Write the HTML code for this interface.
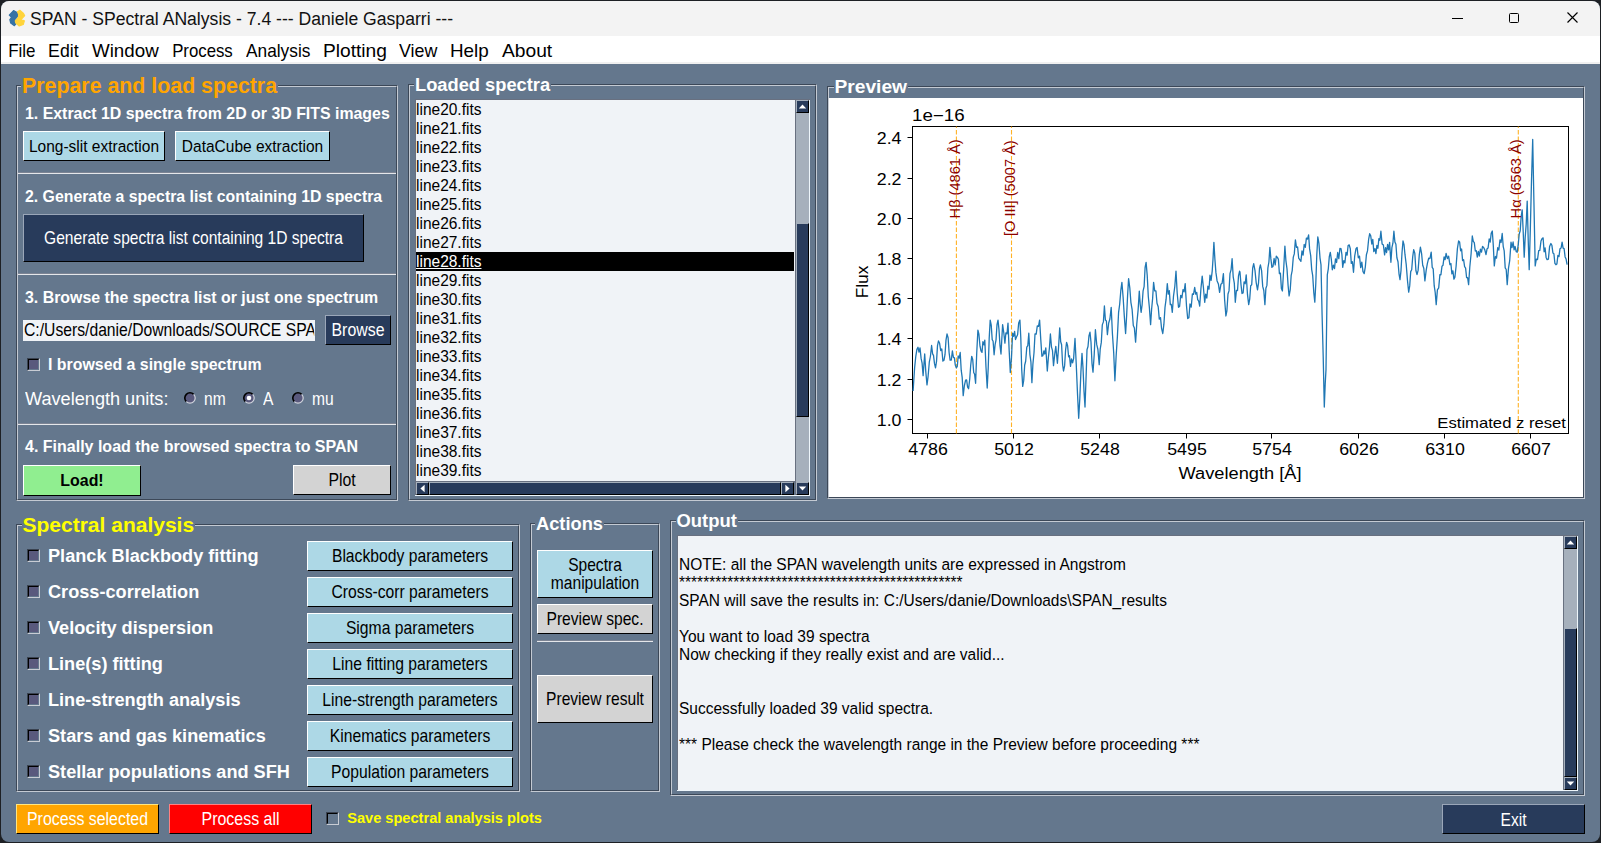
<!DOCTYPE html>
<html><head><meta charset="utf-8"><style>
html,body{margin:0;padding:0;width:1601px;height:843px;overflow:hidden;background:#1d2024;}
body>div,body>svg{position:absolute;box-sizing:border-box;}
.t{font-family:"Liberation Sans", sans-serif;white-space:nowrap;}
</style></head><body>
<div style="left:0px;top:0px;width:1601px;height:843px;background:#1d2024;"></div>
<div style="left:1px;top:1px;width:1599px;height:841px;background:#64778d;border-radius:8px;overflow:hidden;"></div>
<div style="left:1px;top:1px;width:1599px;height:35px;background:#f3f3f3;border-radius:8px 8px 0 0;"></div>
<div style="left:1px;top:36px;width:1599px;height:26px;background:#ffffff;"></div>
<div style="left:1px;top:62px;width:1599px;height:2px;background:#f0f0f0;"></div>
<svg style="left:0;top:0;width:40px;height:40px" viewBox="0 0 40 40"><polygon points="9.27,15.12 13.55,10.56 17.82,13.12 18.68,15.40 14.97,19.39 16.11,23.66 14.40,25.66 10.70,23.09 9.84,19.68 11.55,17.40" fill="#3572a5" stroke="#3572a5" stroke-width="1.2" stroke-linejoin="round"/><polygon points="17.54,11.70 19.81,10.27 23.52,13.41 24.66,15.69 20.95,19.68 24.37,20.81 23.23,24.52 19.25,25.94 15.83,23.09 15.26,20.81 18.39,17.40 18.68,14.55" fill="#ffd43b" stroke="#ffd43b" stroke-width="1.2" stroke-linejoin="round"/></svg>
<div class="t" style="left:30px;top:10.90px;font-size:17.60px;line-height:17.60px;font-weight:400;color:#111;">SPAN - SPectral ANalysis - 7.4 --- Daniele Gasparri ---</div>
<div style="left:1452px;top:18px;width:11px;height:1px;background:#000;"></div>
<div style="left:1509px;top:13px;width:10px;height:10px;border:1px solid #000;border-radius:1.5px;"></div>
<svg style="left:1566.5px;top:12.2px;width:11px;height:11px" viewBox="0 0 11 11"><path d="M0.5 0.5 L10.5 10.5 M10.5 0.5 L0.5 10.5" stroke="#000" stroke-width="1.15"/></svg>
<div class="t" style="left:7.5px;top:41.86px;font-size:18.60px;line-height:18.60px;font-weight:400;color:#000;transform:scaleX(0.911);transform-origin:1.5px 50%;">File</div>
<div class="t" style="left:47.5px;top:41.86px;font-size:18.60px;line-height:18.60px;font-weight:400;color:#000;transform:scaleX(0.953);transform-origin:1.5px 50%;">Edit</div>
<div class="t" style="left:91.9px;top:41.86px;font-size:18.60px;line-height:18.60px;font-weight:400;color:#000;transform:scaleX(1.009);transform-origin:0.5px 50%;">Window</div>
<div class="t" style="left:171.5px;top:41.86px;font-size:18.60px;line-height:18.60px;font-weight:400;color:#000;transform:scaleX(0.902);transform-origin:1.5px 50%;">Process</div>
<div class="t" style="left:245.9px;top:41.86px;font-size:18.60px;line-height:18.60px;font-weight:400;color:#000;transform:scaleX(0.929);transform-origin:0.5px 50%;">Analysis</div>
<div class="t" style="left:322.9px;top:41.86px;font-size:18.60px;line-height:18.60px;font-weight:400;color:#000;transform:scaleX(1.031);transform-origin:1.5px 50%;">Plotting</div>
<div class="t" style="left:399.3px;top:41.86px;font-size:18.60px;line-height:18.60px;font-weight:400;color:#000;transform:scaleX(0.959);transform-origin:0.5px 50%;">View</div>
<div class="t" style="left:449.5px;top:41.86px;font-size:18.60px;line-height:18.60px;font-weight:400;color:#000;transform:scaleX(1.014);transform-origin:1.5px 50%;">Help</div>
<div class="t" style="left:501.5px;top:41.86px;font-size:18.60px;line-height:18.60px;font-weight:400;color:#000;transform:scaleX(1.033);transform-origin:0.5px 50%;">About</div>
<div style="left:16px;top:85px;width:382px;height:416px;border-top:1px solid #3c4858;border-left:1px solid #3c4858;border-right:1px solid #c4cad3;border-bottom:1px solid #c4cad3;"></div>
<div style="left:17px;top:86px;width:380px;height:414px;border-top:1px solid #c4cad3;border-left:1px solid #c4cad3;border-right:1px solid #3c4858;border-bottom:1px solid #3c4858;"></div>
<div class="t" style="left:21px;top:75.93px;padding:0 1px;background:#64778d;font-size:21.35px;line-height:21.35px;font-weight:700;color:#ffa500;">Prepare and load spectra</div>
<div class="t" style="left:25px;top:105.54px;font-size:15.90px;line-height:15.90px;font-weight:700;color:#fff;">1. Extract 1D spectra from 2D or 3D FITS images</div>
<div style="left:23px;top:131px;width:142px;height:30px;background:#add8e6;border-top:1px solid #ffffff;border-left:1px solid #ffffff;border-right:1px solid #000000;border-bottom:1px solid #000000;"></div>
<div class="t" style="left:-37px;width:262px;text-align:center;top:138.30px;font-size:17.36px;line-height:17.36px;font-weight:400;color:#000;transform:scaleX(0.8929);transform-origin:50% 50%;">Long-slit extraction</div>
<div style="left:175px;top:131px;width:155px;height:30px;background:#add8e6;border-top:1px solid #ffffff;border-left:1px solid #ffffff;border-right:1px solid #000000;border-bottom:1px solid #000000;"></div>
<div class="t" style="left:115px;width:275px;text-align:center;top:138.30px;font-size:17.36px;line-height:17.36px;font-weight:400;color:#000;transform:scaleX(0.8929);transform-origin:50% 50%;">DataCube extraction</div>
<div style="left:18px;top:172px;width:378px;height:1px;background:#7c8494;"></div>
<div style="left:18px;top:173px;width:378px;height:1px;background:#e4e6ea;"></div>
<div class="t" style="left:25px;top:188.60px;font-size:15.83px;line-height:15.83px;font-weight:700;color:#fff;">2. Generate a spectra list containing 1D spectra</div>
<div style="left:23px;top:214px;width:341px;height:48px;background:#283b5b;border-top:1px solid #9aa6b8;border-left:1px solid #9aa6b8;border-right:1px solid #000;border-bottom:1px solid #000;"></div>
<div class="t" style="left:-37px;width:461px;text-align:center;top:230.21px;font-size:17.47px;line-height:17.47px;font-weight:400;color:#fff;transform:scaleX(0.8929);transform-origin:50% 50%;">Generate spectra list containing 1D spectra</div>
<div style="left:18px;top:273px;width:378px;height:1px;background:#7c8494;"></div>
<div style="left:18px;top:274px;width:378px;height:1px;background:#e4e6ea;"></div>
<div class="t" style="left:25px;top:289.54px;font-size:15.90px;line-height:15.90px;font-weight:700;color:#fff;">3. Browse the spectra list or just one spectrum</div>
<div style="left:23px;top:320px;width:292px;height:21px;background:#f0f3f7;overflow:hidden;"></div>
<div class="t" style="left:24px;top:322.12px;font-size:17.58px;line-height:17.58px;font-weight:400;color:#000;transform:scaleX(0.8929);transform-origin:0 50%;width:324.8px;overflow:hidden;white-space:nowrap;">C:/Users/danie/Downloads/SOURCE SPAN/line_spectra.txt</div>
<div style="left:325px;top:315px;width:66px;height:30px;background:#283b5b;border-top:1px solid #9aa6b8;border-left:1px solid #9aa6b8;border-right:1px solid #000;border-bottom:1px solid #000;"></div>
<div class="t" style="left:265px;width:186px;text-align:center;top:321.93px;font-size:17.81px;line-height:17.81px;font-weight:400;color:#fff;transform:scaleX(0.8929);transform-origin:50% 50%;">Browse</div>
<div style="left:27px;top:358px;width:13px;height:13px;border-top:1px solid #3a4250;border-left:1px solid #3a4250;border-right:1px solid #c8ccd4;border-bottom:1px solid #c8ccd4;"></div>
<div style="left:28px;top:359px;width:11px;height:11px;background:#59597d;border-top:1px solid #000;border-left:1px solid #000;border-right:1px solid #64778d;border-bottom:1px solid #64778d;"></div>
<div class="t" style="left:48px;top:356.54px;font-size:15.90px;line-height:15.90px;font-weight:700;color:#fff;">I browsed a single spectrum</div>
<div class="t" style="left:24.5px;top:390.02px;font-size:18.88px;line-height:18.88px;font-weight:400;color:#fff;transform:scaleX(0.9615);transform-origin:0 50%;">Wavelength units:</div>
<svg style="left:0;top:0;width:1601px;height:843px" viewBox="0 0 1601 843"><circle cx="190" cy="398" r="5.2" fill="#59597d"/><path d="M 186.32 401.68 A 5.2 5.2 0 0 1 193.68 394.32" stroke="#000" stroke-width="1.6" fill="none"/><path d="M 193.68 394.32 A 5.2 5.2 0 0 1 186.32 401.68" stroke="#d0d4dc" stroke-width="1.2" fill="none"/></svg>
<div class="t" style="left:204px;top:390.71px;font-size:17.47px;line-height:17.47px;font-weight:400;color:#fff;transform:scaleX(0.8929);transform-origin:0 50%;">nm</div>
<svg style="left:0;top:0;width:1601px;height:843px" viewBox="0 0 1601 843"><circle cx="249" cy="398" r="5.2" fill="#59597d"/><path d="M 245.32 401.68 A 5.2 5.2 0 0 1 252.68 394.32" stroke="#000" stroke-width="1.6" fill="none"/><path d="M 252.68 394.32 A 5.2 5.2 0 0 1 245.32 401.68" stroke="#d0d4dc" stroke-width="1.2" fill="none"/><circle cx="249" cy="398" r="2.3" fill="#fff"/></svg>
<div class="t" style="left:263px;top:390.71px;font-size:17.47px;line-height:17.47px;font-weight:400;color:#fff;transform:scaleX(0.8929);transform-origin:0 50%;">A</div>
<svg style="left:0;top:0;width:1601px;height:843px" viewBox="0 0 1601 843"><circle cx="298" cy="398" r="5.2" fill="#59597d"/><path d="M 294.32 401.68 A 5.2 5.2 0 0 1 301.68 394.32" stroke="#000" stroke-width="1.6" fill="none"/><path d="M 301.68 394.32 A 5.2 5.2 0 0 1 294.32 401.68" stroke="#d0d4dc" stroke-width="1.2" fill="none"/></svg>
<div class="t" style="left:312px;top:390.71px;font-size:17.47px;line-height:17.47px;font-weight:400;color:#fff;transform:scaleX(0.8929);transform-origin:0 50%;">mu</div>
<div style="left:18px;top:423px;width:378px;height:1px;background:#7c8494;"></div>
<div style="left:18px;top:424px;width:378px;height:1px;background:#e4e6ea;"></div>
<div class="t" style="left:25px;top:439.46px;font-size:16.00px;line-height:16.00px;font-weight:700;color:#fff;">4. Finally load the browsed spectra to SPAN</div>
<div style="left:23px;top:465px;width:118px;height:31px;background:#90ee90;border-top:1px solid #ffffff;border-left:1px solid #ffffff;border-right:1px solid #000000;border-bottom:1px solid #000000;"></div>
<div class="t" style="left:-37px;width:238px;text-align:center;top:472.50px;font-size:15.95px;line-height:15.95px;font-weight:700;color:#000;">Load!</div>
<div style="left:293px;top:465px;width:98px;height:30px;background:#d3d3d3;border-top:1px solid #ffffff;border-left:1px solid #ffffff;border-right:1px solid #000000;border-bottom:1px solid #000000;"></div>
<div class="t" style="left:233px;width:218px;text-align:center;top:472.02px;font-size:17.70px;line-height:17.70px;font-weight:400;color:#000;transform:scaleX(0.8929);transform-origin:50% 50%;">Plot</div>
<div style="left:408px;top:84px;width:409px;height:417px;border-top:1px solid #3c4858;border-left:1px solid #3c4858;border-right:1px solid #c4cad3;border-bottom:1px solid #c4cad3;"></div>
<div style="left:409px;top:85px;width:407px;height:415px;border-top:1px solid #c4cad3;border-left:1px solid #c4cad3;border-right:1px solid #3c4858;border-bottom:1px solid #3c4858;"></div>
<div class="t" style="left:414px;top:75.51px;padding:0 1px;background:#64778d;font-size:18.3px;line-height:18.3px;font-weight:700;color:#fff;">Loaded spectra</div>
<div style="left:416px;top:100px;width:379px;height:381px;background:#f0f3f7;"></div>
<div class="t" style="left:416.3px;top:101.30px;font-size:17.36px;line-height:17.36px;font-weight:400;color:#000;transform:scaleX(0.8929);transform-origin:0 50%;">line20.fits</div>
<div class="t" style="left:416.3px;top:120.30px;font-size:17.36px;line-height:17.36px;font-weight:400;color:#000;transform:scaleX(0.8929);transform-origin:0 50%;">line21.fits</div>
<div class="t" style="left:416.3px;top:139.30px;font-size:17.36px;line-height:17.36px;font-weight:400;color:#000;transform:scaleX(0.8929);transform-origin:0 50%;">line22.fits</div>
<div class="t" style="left:416.3px;top:158.30px;font-size:17.36px;line-height:17.36px;font-weight:400;color:#000;transform:scaleX(0.8929);transform-origin:0 50%;">line23.fits</div>
<div class="t" style="left:416.3px;top:177.30px;font-size:17.36px;line-height:17.36px;font-weight:400;color:#000;transform:scaleX(0.8929);transform-origin:0 50%;">line24.fits</div>
<div class="t" style="left:416.3px;top:196.30px;font-size:17.36px;line-height:17.36px;font-weight:400;color:#000;transform:scaleX(0.8929);transform-origin:0 50%;">line25.fits</div>
<div class="t" style="left:416.3px;top:215.30px;font-size:17.36px;line-height:17.36px;font-weight:400;color:#000;transform:scaleX(0.8929);transform-origin:0 50%;">line26.fits</div>
<div class="t" style="left:416.3px;top:234.30px;font-size:17.36px;line-height:17.36px;font-weight:400;color:#000;transform:scaleX(0.8929);transform-origin:0 50%;">line27.fits</div>
<div style="left:416px;top:252px;width:378px;height:19px;background:#000;"></div>
<div class="t" style="left:416.3px;top:253.30px;font-size:17.36px;line-height:17.36px;font-weight:400;color:#fff;transform:scaleX(0.8929);transform-origin:0 50%;text-decoration:underline;">line28.fits</div>
<div class="t" style="left:416.3px;top:272.30px;font-size:17.36px;line-height:17.36px;font-weight:400;color:#000;transform:scaleX(0.8929);transform-origin:0 50%;">line29.fits</div>
<div class="t" style="left:416.3px;top:291.30px;font-size:17.36px;line-height:17.36px;font-weight:400;color:#000;transform:scaleX(0.8929);transform-origin:0 50%;">line30.fits</div>
<div class="t" style="left:416.3px;top:310.30px;font-size:17.36px;line-height:17.36px;font-weight:400;color:#000;transform:scaleX(0.8929);transform-origin:0 50%;">line31.fits</div>
<div class="t" style="left:416.3px;top:329.30px;font-size:17.36px;line-height:17.36px;font-weight:400;color:#000;transform:scaleX(0.8929);transform-origin:0 50%;">line32.fits</div>
<div class="t" style="left:416.3px;top:348.30px;font-size:17.36px;line-height:17.36px;font-weight:400;color:#000;transform:scaleX(0.8929);transform-origin:0 50%;">line33.fits</div>
<div class="t" style="left:416.3px;top:367.30px;font-size:17.36px;line-height:17.36px;font-weight:400;color:#000;transform:scaleX(0.8929);transform-origin:0 50%;">line34.fits</div>
<div class="t" style="left:416.3px;top:386.30px;font-size:17.36px;line-height:17.36px;font-weight:400;color:#000;transform:scaleX(0.8929);transform-origin:0 50%;">line35.fits</div>
<div class="t" style="left:416.3px;top:405.30px;font-size:17.36px;line-height:17.36px;font-weight:400;color:#000;transform:scaleX(0.8929);transform-origin:0 50%;">line36.fits</div>
<div class="t" style="left:416.3px;top:424.30px;font-size:17.36px;line-height:17.36px;font-weight:400;color:#000;transform:scaleX(0.8929);transform-origin:0 50%;">line37.fits</div>
<div class="t" style="left:416.3px;top:443.30px;font-size:17.36px;line-height:17.36px;font-weight:400;color:#000;transform:scaleX(0.8929);transform-origin:0 50%;">line38.fits</div>
<div class="t" style="left:416.3px;top:462.30px;font-size:17.36px;line-height:17.36px;font-weight:400;color:#000;transform:scaleX(0.8929);transform-origin:0 50%;">line39.fits</div>
<div style="left:415px;top:99px;width:395px;height:1px;background:#687080;"></div>
<div style="left:415px;top:99px;width:1px;height:397px;background:#687080;"></div>
<div style="left:795px;top:100px;width:15px;height:395px;background:#a6b0bc;border-left:1px solid #687080;border-right:1px solid #eef6fb;"></div>
<div style="left:796px;top:223px;width:13px;height:194px;background:#283b5b;border-top:1px solid #a6b0bc;border-left:1px solid #a6b0bc;border-right:1px solid #000;border-bottom:1px solid #000;"></div>
<div style="left:796px;top:100px;width:13px;height:13px;background:#283b5b;border-top:1px solid #a6b0bc;border-left:1px solid #a6b0bc;border-right:1px solid #000;border-bottom:1px solid #000;"></div>
<svg style="left:0;top:0;width:1601px;height:843px" viewBox="0 0 1601 843"><path d="M798.8 108.6 L806.2 108.6 L802.5 104.4 Z" fill="#fff"/></svg>
<div style="left:796px;top:482px;width:13px;height:13px;background:#283b5b;border-top:1px solid #a6b0bc;border-left:1px solid #a6b0bc;border-right:1px solid #000;border-bottom:1px solid #000;"></div>
<svg style="left:0;top:0;width:1601px;height:843px" viewBox="0 0 1601 843"><path d="M798.8 486.4 L806.2 486.4 L802.5 490.6 Z" fill="#fff"/></svg>
<div style="left:416px;top:481px;width:379px;height:1px;background:#687080;"></div>
<div style="left:415px;top:495px;width:395px;height:1px;background:#eef6fb;"></div>
<div style="left:429px;top:482px;width:352px;height:13px;background:#283b5b;border-top:1px solid #a6b0bc;border-left:1px solid #a6b0bc;border-right:1px solid #000;border-bottom:1px solid #000;"></div>
<div style="left:416px;top:482px;width:13px;height:13px;background:#283b5b;border-top:1px solid #a6b0bc;border-left:1px solid #a6b0bc;border-right:1px solid #000;border-bottom:1px solid #000;"></div>
<svg style="left:0;top:0;width:1601px;height:843px" viewBox="0 0 1601 843"><path d="M424.6 484.8 L424.6 492.2 L420.4 488.5 Z" fill="#fff"/></svg>
<div style="left:781px;top:482px;width:13px;height:13px;background:#283b5b;border-top:1px solid #a6b0bc;border-left:1px solid #a6b0bc;border-right:1px solid #000;border-bottom:1px solid #000;"></div>
<svg style="left:0;top:0;width:1601px;height:843px" viewBox="0 0 1601 843"><path d="M785.4 484.8 L785.4 492.2 L789.6 488.5 Z" fill="#fff"/></svg>
<div style="left:827px;top:86px;width:758px;height:413px;border-top:1px solid #3c4858;border-left:1px solid #3c4858;border-right:1px solid #c4cad3;border-bottom:1px solid #c4cad3;"></div>
<div style="left:828px;top:87px;width:756px;height:411px;border-top:1px solid #c4cad3;border-left:1px solid #c4cad3;border-right:1px solid #3c4858;border-bottom:1px solid #3c4858;"></div>
<div class="t" style="left:833.5px;top:76.55px;padding:0 1px;background:#64778d;font-size:19.2px;line-height:19.2px;font-weight:700;color:#fff;">Preview</div>
<div style="left:829px;top:98px;width:754px;height:399px;background:#fff;"></div>
<div style="left:16px;top:524px;width:504px;height:268px;border-top:1px solid #3c4858;border-left:1px solid #3c4858;border-right:1px solid #c4cad3;border-bottom:1px solid #c4cad3;"></div>
<div style="left:17px;top:525px;width:502px;height:266px;border-top:1px solid #c4cad3;border-left:1px solid #c4cad3;border-right:1px solid #3c4858;border-bottom:1px solid #3c4858;"></div>
<div class="t" style="left:21.5px;top:513.92px;padding:0 1px;background:#64778d;font-size:21px;line-height:21px;font-weight:700;color:#ffff00;">Spectral analysis</div>
<div style="left:27px;top:549px;width:13px;height:13px;border-top:1px solid #3a4250;border-left:1px solid #3a4250;border-right:1px solid #c8ccd4;border-bottom:1px solid #c8ccd4;"></div>
<div style="left:28px;top:550px;width:11px;height:11px;background:#59597d;border-top:1px solid #000;border-left:1px solid #000;border-right:1px solid #64778d;border-bottom:1px solid #64778d;"></div>
<div class="t" style="left:48px;top:546.64px;font-size:18.15px;line-height:18.15px;font-weight:700;color:#fff;">Planck Blackbody fitting</div>
<div style="left:307px;top:541px;width:206px;height:30px;background:#add8e6;border-top:1px solid #ffffff;border-left:1px solid #ffffff;border-right:1px solid #000000;border-bottom:1px solid #000000;"></div>
<div class="t" style="left:247px;width:326px;text-align:center;top:548.12px;font-size:17.58px;line-height:17.58px;font-weight:400;color:#000;transform:scaleX(0.8929);transform-origin:50% 50%;">Blackbody parameters</div>
<div style="left:27px;top:585px;width:13px;height:13px;border-top:1px solid #3a4250;border-left:1px solid #3a4250;border-right:1px solid #c8ccd4;border-bottom:1px solid #c8ccd4;"></div>
<div style="left:28px;top:586px;width:11px;height:11px;background:#59597d;border-top:1px solid #000;border-left:1px solid #000;border-right:1px solid #64778d;border-bottom:1px solid #64778d;"></div>
<div class="t" style="left:48px;top:582.64px;font-size:18.15px;line-height:18.15px;font-weight:700;color:#fff;">Cross-correlation</div>
<div style="left:307px;top:577px;width:206px;height:30px;background:#add8e6;border-top:1px solid #ffffff;border-left:1px solid #ffffff;border-right:1px solid #000000;border-bottom:1px solid #000000;"></div>
<div class="t" style="left:247px;width:326px;text-align:center;top:584.12px;font-size:17.58px;line-height:17.58px;font-weight:400;color:#000;transform:scaleX(0.8929);transform-origin:50% 50%;">Cross-corr parameters</div>
<div style="left:27px;top:621px;width:13px;height:13px;border-top:1px solid #3a4250;border-left:1px solid #3a4250;border-right:1px solid #c8ccd4;border-bottom:1px solid #c8ccd4;"></div>
<div style="left:28px;top:622px;width:11px;height:11px;background:#59597d;border-top:1px solid #000;border-left:1px solid #000;border-right:1px solid #64778d;border-bottom:1px solid #64778d;"></div>
<div class="t" style="left:48px;top:618.64px;font-size:18.15px;line-height:18.15px;font-weight:700;color:#fff;">Velocity dispersion</div>
<div style="left:307px;top:613px;width:206px;height:30px;background:#add8e6;border-top:1px solid #ffffff;border-left:1px solid #ffffff;border-right:1px solid #000000;border-bottom:1px solid #000000;"></div>
<div class="t" style="left:247px;width:326px;text-align:center;top:620.12px;font-size:17.58px;line-height:17.58px;font-weight:400;color:#000;transform:scaleX(0.8929);transform-origin:50% 50%;">Sigma parameters</div>
<div style="left:27px;top:657px;width:13px;height:13px;border-top:1px solid #3a4250;border-left:1px solid #3a4250;border-right:1px solid #c8ccd4;border-bottom:1px solid #c8ccd4;"></div>
<div style="left:28px;top:658px;width:11px;height:11px;background:#59597d;border-top:1px solid #000;border-left:1px solid #000;border-right:1px solid #64778d;border-bottom:1px solid #64778d;"></div>
<div class="t" style="left:48px;top:654.64px;font-size:18.15px;line-height:18.15px;font-weight:700;color:#fff;">Line(s) fitting</div>
<div style="left:307px;top:649px;width:206px;height:30px;background:#add8e6;border-top:1px solid #ffffff;border-left:1px solid #ffffff;border-right:1px solid #000000;border-bottom:1px solid #000000;"></div>
<div class="t" style="left:247px;width:326px;text-align:center;top:656.12px;font-size:17.58px;line-height:17.58px;font-weight:400;color:#000;transform:scaleX(0.8929);transform-origin:50% 50%;">Line fitting parameters</div>
<div style="left:27px;top:693px;width:13px;height:13px;border-top:1px solid #3a4250;border-left:1px solid #3a4250;border-right:1px solid #c8ccd4;border-bottom:1px solid #c8ccd4;"></div>
<div style="left:28px;top:694px;width:11px;height:11px;background:#59597d;border-top:1px solid #000;border-left:1px solid #000;border-right:1px solid #64778d;border-bottom:1px solid #64778d;"></div>
<div class="t" style="left:48px;top:690.64px;font-size:18.15px;line-height:18.15px;font-weight:700;color:#fff;">Line-strength analysis</div>
<div style="left:307px;top:685px;width:206px;height:30px;background:#add8e6;border-top:1px solid #ffffff;border-left:1px solid #ffffff;border-right:1px solid #000000;border-bottom:1px solid #000000;"></div>
<div class="t" style="left:247px;width:326px;text-align:center;top:692.12px;font-size:17.58px;line-height:17.58px;font-weight:400;color:#000;transform:scaleX(0.8929);transform-origin:50% 50%;">Line-strength parameters</div>
<div style="left:27px;top:729px;width:13px;height:13px;border-top:1px solid #3a4250;border-left:1px solid #3a4250;border-right:1px solid #c8ccd4;border-bottom:1px solid #c8ccd4;"></div>
<div style="left:28px;top:730px;width:11px;height:11px;background:#59597d;border-top:1px solid #000;border-left:1px solid #000;border-right:1px solid #64778d;border-bottom:1px solid #64778d;"></div>
<div class="t" style="left:48px;top:726.64px;font-size:18.15px;line-height:18.15px;font-weight:700;color:#fff;">Stars and gas kinematics</div>
<div style="left:307px;top:721px;width:206px;height:30px;background:#add8e6;border-top:1px solid #ffffff;border-left:1px solid #ffffff;border-right:1px solid #000000;border-bottom:1px solid #000000;"></div>
<div class="t" style="left:247px;width:326px;text-align:center;top:728.12px;font-size:17.58px;line-height:17.58px;font-weight:400;color:#000;transform:scaleX(0.8929);transform-origin:50% 50%;">Kinematics parameters</div>
<div style="left:27px;top:765px;width:13px;height:13px;border-top:1px solid #3a4250;border-left:1px solid #3a4250;border-right:1px solid #c8ccd4;border-bottom:1px solid #c8ccd4;"></div>
<div style="left:28px;top:766px;width:11px;height:11px;background:#59597d;border-top:1px solid #000;border-left:1px solid #000;border-right:1px solid #64778d;border-bottom:1px solid #64778d;"></div>
<div class="t" style="left:48px;top:762.64px;font-size:18.15px;line-height:18.15px;font-weight:700;color:#fff;">Stellar populations and SFH</div>
<div style="left:307px;top:757px;width:206px;height:30px;background:#add8e6;border-top:1px solid #ffffff;border-left:1px solid #ffffff;border-right:1px solid #000000;border-bottom:1px solid #000000;"></div>
<div class="t" style="left:247px;width:326px;text-align:center;top:764.12px;font-size:17.58px;line-height:17.58px;font-weight:400;color:#000;transform:scaleX(0.8929);transform-origin:50% 50%;">Population parameters</div>
<div style="left:530px;top:523px;width:130px;height:269px;border-top:1px solid #3c4858;border-left:1px solid #3c4858;border-right:1px solid #c4cad3;border-bottom:1px solid #c4cad3;"></div>
<div style="left:531px;top:524px;width:128px;height:267px;border-top:1px solid #c4cad3;border-left:1px solid #c4cad3;border-right:1px solid #3c4858;border-bottom:1px solid #3c4858;"></div>
<div class="t" style="left:535px;top:514.81px;padding:0 1px;background:#64778d;font-size:18.3px;line-height:18.3px;font-weight:700;color:#fff;">Actions</div>
<div style="left:537px;top:550px;width:116px;height:48px;background:#add8e6;border-top:1px solid #ffffff;border-left:1px solid #ffffff;border-right:1px solid #000000;border-bottom:1px solid #000000;"></div>
<div class="t" style="left:477px;width:236px;text-align:center;top:557.21px;font-size:17.47px;line-height:17.47px;font-weight:400;color:#000;transform:scaleX(0.8929);transform-origin:50% 50%;">Spectra</div>
<div class="t" style="left:477px;width:236px;text-align:center;top:575.21px;font-size:17.47px;line-height:17.47px;font-weight:400;color:#000;transform:scaleX(0.8929);transform-origin:50% 50%;">manipulation</div>
<div style="left:537px;top:604px;width:116px;height:30px;background:#d3d3d3;border-top:1px solid #ffffff;border-left:1px solid #ffffff;border-right:1px solid #000000;border-bottom:1px solid #000000;"></div>
<div class="t" style="left:477px;width:236px;text-align:center;top:611.21px;font-size:17.47px;line-height:17.47px;font-weight:400;color:#000;transform:scaleX(0.8929);transform-origin:50% 50%;">Preview spec.</div>
<div style="left:537px;top:640px;width:116px;height:1px;background:#7c8494;"></div>
<div style="left:537px;top:641px;width:116px;height:1px;background:#e4e6ea;"></div>
<div style="left:537px;top:675px;width:116px;height:48px;background:#d3d3d3;border-top:1px solid #ffffff;border-left:1px solid #ffffff;border-right:1px solid #000000;border-bottom:1px solid #000000;"></div>
<div class="t" style="left:477px;width:236px;text-align:center;top:691.21px;font-size:17.47px;line-height:17.47px;font-weight:400;color:#000;transform:scaleX(0.8929);transform-origin:50% 50%;">Preview result</div>
<div style="left:670px;top:520px;width:915px;height:276px;border-top:1px solid #3c4858;border-left:1px solid #3c4858;border-right:1px solid #c4cad3;border-bottom:1px solid #c4cad3;"></div>
<div style="left:671px;top:521px;width:913px;height:274px;border-top:1px solid #c4cad3;border-left:1px solid #c4cad3;border-right:1px solid #3c4858;border-bottom:1px solid #3c4858;"></div>
<div class="t" style="left:675.5px;top:511.62px;padding:0 1px;background:#64778d;font-size:18.4px;line-height:18.4px;font-weight:700;color:#fff;">Output</div>
<div style="left:678px;top:536px;width:885px;height:254px;background:#f0f3f7;"></div>
<div class="t" style="left:678.5px;top:555.70px;font-size:17.36px;line-height:17.36px;font-weight:400;color:#000;transform:scaleX(0.8929);transform-origin:0 50%;">NOTE: all the SPAN wavelength units are expressed in Angstrom</div>
<div class="t" style="left:678.5px;top:573.70px;font-size:17.36px;line-height:17.36px;font-weight:400;color:#000;transform:scaleX(0.8929);transform-origin:0 50%;">***********************************************</div>
<div class="t" style="left:678.5px;top:591.70px;font-size:17.36px;line-height:17.36px;font-weight:400;color:#000;transform:scaleX(0.8929);transform-origin:0 50%;">SPAN will save the results in: C:/Users/danie/Downloads\SPAN_results</div>
<div class="t" style="left:678.5px;top:627.70px;font-size:17.36px;line-height:17.36px;font-weight:400;color:#000;transform:scaleX(0.8929);transform-origin:0 50%;">You want to load 39 spectra</div>
<div class="t" style="left:678.5px;top:645.70px;font-size:17.36px;line-height:17.36px;font-weight:400;color:#000;transform:scaleX(0.8929);transform-origin:0 50%;">Now checking if they really exist and are valid...</div>
<div class="t" style="left:678.5px;top:699.70px;font-size:17.36px;line-height:17.36px;font-weight:400;color:#000;transform:scaleX(0.8929);transform-origin:0 50%;">Successfully loaded 39 valid spectra.</div>
<div class="t" style="left:678.5px;top:735.70px;font-size:17.36px;line-height:17.36px;font-weight:400;color:#000;transform:scaleX(0.8929);transform-origin:0 50%;">*** Please check the wavelength range in the Preview before proceeding ***</div>
<div style="left:677px;top:535px;width:901px;height:1px;background:#687080;"></div>
<div style="left:677px;top:535px;width:1px;height:256px;background:#687080;"></div>
<div style="left:677px;top:790px;width:901px;height:1px;background:#eef6fb;"></div>
<div style="left:1563px;top:536px;width:15px;height:254px;background:#a6b0bc;border-left:1px solid #687080;border-right:1px solid #eef6fb;"></div>
<div style="left:1564px;top:628px;width:13px;height:149px;background:#283b5b;border-top:1px solid #a6b0bc;border-left:1px solid #a6b0bc;border-right:1px solid #000;border-bottom:1px solid #000;"></div>
<div style="left:1564px;top:536px;width:13px;height:13px;background:#283b5b;border-top:1px solid #a6b0bc;border-left:1px solid #a6b0bc;border-right:1px solid #000;border-bottom:1px solid #000;"></div>
<svg style="left:0;top:0;width:1601px;height:843px" viewBox="0 0 1601 843"><path d="M1566.8 544.6 L1574.2 544.6 L1570.5 540.4 Z" fill="#fff"/></svg>
<div style="left:1564px;top:777px;width:13px;height:13px;background:#283b5b;border-top:1px solid #a6b0bc;border-left:1px solid #a6b0bc;border-right:1px solid #000;border-bottom:1px solid #000;"></div>
<svg style="left:0;top:0;width:1601px;height:843px" viewBox="0 0 1601 843"><path d="M1566.8 781.4 L1574.2 781.4 L1570.5 785.6 Z" fill="#fff"/></svg>
<div style="left:16px;top:804px;width:143px;height:30px;background:#ffa500;border-top:1px solid #ffe680;border-left:1px solid #ffe680;border-right:1px solid #000;border-bottom:1px solid #000;"></div>
<div class="t" style="left:-44px;width:263px;text-align:center;top:811.43px;font-size:17.81px;line-height:17.81px;font-weight:400;color:#fff;transform:scaleX(0.8929);transform-origin:50% 50%;">Process selected</div>
<div style="left:169px;top:804px;width:143px;height:30px;background:#ff0000;border-top:1px solid #ff8080;border-left:1px solid #ff8080;border-right:1px solid #000;border-bottom:1px solid #000;"></div>
<div class="t" style="left:109px;width:263px;text-align:center;top:811.38px;font-size:17.86px;line-height:17.86px;font-weight:400;color:#fff;transform:scaleX(0.8929);transform-origin:50% 50%;">Process all</div>
<div style="left:326px;top:812px;width:13px;height:13px;border-top:1px solid #3a4250;border-left:1px solid #3a4250;border-right:1px solid #c8ccd4;border-bottom:1px solid #c8ccd4;"></div>
<div style="left:327px;top:813px;width:11px;height:11px;background:#64778d;border-top:1px solid #000;border-left:1px solid #000;border-right:1px solid #64778d;border-bottom:1px solid #64778d;"></div>
<div class="t" style="left:347.2px;top:810.64px;font-size:14.60px;line-height:14.60px;font-weight:700;color:#ffff00;">Save spectral analysis plots</div>
<div style="left:1442px;top:804px;width:143px;height:30px;background:#283b5b;border-top:1px solid #9aa6b8;border-left:1px solid #9aa6b8;border-right:1px solid #000;border-bottom:1px solid #000;"></div>
<div class="t" style="left:1382px;width:263px;text-align:center;top:811.71px;font-size:17.47px;line-height:17.47px;font-weight:400;color:#fff;transform:scaleX(0.8929);transform-origin:50% 50%;">Exit</div>
<svg style="left:0;top:0;width:1601px;height:843px" viewBox="0 0 1601 843"><rect x="912.5" y="126.5" width="656.0" height="307.0" fill="none" stroke="#000" stroke-width="1"/><line x1="956.4" y1="433.5" x2="956.4" y2="126.5" stroke="#ffa500" stroke-opacity="0.85" stroke-width="1.1" stroke-dasharray="4.5,2"/><line x1="1011.5" y1="433.5" x2="1011.5" y2="126.5" stroke="#ffa500" stroke-opacity="0.85" stroke-width="1.1" stroke-dasharray="4.5,2"/><line x1="1518.3" y1="433.5" x2="1518.3" y2="126.5" stroke="#ffa500" stroke-opacity="0.85" stroke-width="1.1" stroke-dasharray="4.5,2"/><path d="M913.1 391.0 L914.6 367.9 L915.8 356.3 L916.9 349.4 L918.0 347.3 L919.0 352.0 L920.0 347.8 L921.1 358.4 L922.1 363.2 L923.1 375.6 L924.7 354.0 L925.8 371.9 L927.0 384.9 L928.1 376.3 L929.3 362.2 L930.4 356.5 L931.6 345.5 L932.6 353.9 L933.5 355.4 L934.5 363.7 L935.5 367.9 L936.5 361.6 L937.5 345.6 L938.5 340.9 L939.6 343.3 L940.7 350.5 L941.8 349.0 L942.9 361.1 L944.0 360.2 L945.0 354.7 L946.0 340.1 L947.0 334.0 L948.1 337.8 L949.1 352.6 L950.1 360.2 L951.3 360.0 L952.4 350.9 L953.4 357.3 L954.4 357.8 L955.3 365.1 L956.3 367.9 L957.3 366.3 L958.2 355.9 L959.2 358.1 L960.2 352.5 L961.2 370.2 L962.2 377.7 L963.2 395.7 L964.4 385.5 L965.6 380.2 L966.6 379.9 L967.6 387.2 L968.6 388.7 L969.7 379.2 L970.7 365.3 L971.7 356.3 L972.7 359.4 L973.7 372.5 L974.6 374.3 L975.6 383.3 L976.7 353.4 L977.9 330.1 L978.9 334.2 L980.0 346.2 L981.0 350.9 L982.0 352.4 L982.9 341.7 L983.9 344.8 L984.8 340.1 L986.0 367.3 L987.2 388.0 L988.2 368.4 L989.2 338.2 L990.2 320.1 L991.2 324.8 L992.2 339.6 L993.1 341.2 L994.1 354.8 L995.1 344.6 L996.0 340.1 L997.0 324.7 L998.0 320.1 L999.0 329.8 L1000.0 345.7 L1001.0 354.0 L1002.6 324.7 L1003.8 332.8 L1004.9 343.2 L1005.9 332.8 L1007.0 333.9 L1008.0 323.1 L1009.2 351.1 L1010.3 372.5 L1011.5 357.4 L1012.6 333.2 L1013.6 336.4 L1014.6 331.3 L1015.5 339.5 L1016.5 337.0 L1017.6 334.7 L1018.7 322.9 L1019.9 320.1 L1020.8 337.8 L1021.7 369.1 L1022.7 386.4 L1023.7 380.4 L1024.7 365.0 L1025.7 361.0 L1026.8 347.1 L1027.8 345.6 L1028.8 333.2 L1029.9 354.6 L1030.9 361.8 L1031.9 382.6 L1032.9 364.2 L1034.0 352.7 L1035.0 334.0 L1036.2 334.2 L1037.3 325.9 L1038.5 326.4 L1039.6 320.1 L1040.8 339.9 L1041.9 356.3 L1042.9 355.7 L1043.9 350.8 L1044.8 354.0 L1045.8 347.8 L1047.3 371.0 L1048.4 357.1 L1049.4 348.3 L1050.4 334.0 L1051.5 347.1 L1052.5 350.6 L1053.5 365.6 L1054.7 354.6 L1055.8 346.3 L1057.4 363.3 L1058.5 348.3 L1059.7 327.8 L1060.7 341.8 L1061.6 344.8 L1062.6 364.5 L1063.5 371.0 L1064.6 365.9 L1065.6 349.8 L1066.6 342.4 L1067.6 345.8 L1068.6 356.8 L1069.5 355.8 L1070.5 366.4 L1071.5 359.0 L1072.6 362.8 L1073.6 358.6 L1075.0 338.5 L1076.2 363.3 L1077.5 393.6 L1078.7 418.3 L1079.8 398.6 L1080.9 372.1 L1082.0 353.4 L1083.0 367.9 L1084.0 391.2 L1085.0 407.0 L1086.0 379.4 L1087.0 349.7 L1088.0 346.5 L1089.0 335.6 L1090.0 332.2 L1091.0 342.3 L1092.0 363.6 L1093.0 372.1 L1094.2 354.7 L1095.4 329.7 L1096.7 344.4 L1097.9 349.5 L1099.2 364.6 L1100.2 349.2 L1101.3 342.4 L1102.3 324.9 L1103.4 321.9 L1104.4 306.0 L1105.4 320.1 L1106.4 321.0 L1107.4 334.7 L1108.7 323.0 L1109.9 319.0 L1111.2 307.3 L1112.4 333.2 L1113.7 352.8 L1114.9 380.8 L1116.1 356.7 L1117.4 336.4 L1118.6 312.3 L1119.7 304.1 L1120.8 290.7 L1121.9 282.3 L1123.1 297.0 L1124.4 317.6 L1125.6 333.5 L1126.6 316.2 L1127.6 295.3 L1128.6 278.6 L1129.8 287.8 L1130.9 302.3 L1132.1 309.3 L1133.3 325.5 L1134.4 328.1 L1135.6 342.2 L1136.8 323.6 L1138.1 310.1 L1139.3 291.1 L1140.2 304.1 L1141.1 312.3 L1142.1 304.8 L1143.1 290.8 L1144.1 286.7 L1145.1 267.4 L1146.1 262.4 L1147.2 275.1 L1148.3 296.5 L1149.4 307.8 L1150.6 324.7 L1151.6 309.2 L1152.6 298.8 L1153.6 282.3 L1154.7 290.8 L1155.9 290.8 L1157.0 303.2 L1158.2 306.8 L1159.3 319.1 L1160.5 317.6 L1161.6 328.7 L1162.8 333.5 L1163.9 324.2 L1165.0 307.4 L1166.1 299.2 L1167.3 283.6 L1168.3 294.2 L1169.3 290.6 L1170.3 304.6 L1171.3 304.5 L1172.3 312.3 L1173.5 296.1 L1174.8 286.5 L1176.0 271.1 L1177.2 293.3 L1178.5 307.3 L1179.6 306.5 L1180.7 295.3 L1181.9 297.8 L1183.0 289.6 L1184.1 291.8 L1185.2 283.6 L1186.5 306.0 L1187.7 318.5 L1188.9 317.7 L1190.0 303.9 L1191.2 307.2 L1192.4 293.8 L1193.5 294.4 L1194.7 287.3 L1195.7 294.1 L1196.7 292.4 L1197.7 299.7 L1198.7 301.2 L1199.7 306.0 L1200.9 289.0 L1202.2 276.1 L1203.4 287.2 L1204.7 302.3 L1205.7 294.1 L1206.8 298.2 L1207.9 286.1 L1209.0 289.2 L1210.0 275.1 L1211.1 280.4 L1212.2 271.1 L1213.0 259.2 L1213.9 242.4 L1214.9 259.3 L1215.9 272.4 L1217.1 280.9 L1218.4 283.9 L1219.6 292.3 L1220.9 284.3 L1222.1 283.3 L1223.4 273.6 L1224.6 299.4 L1225.9 316.0 L1226.9 310.8 L1228.0 294.0 L1229.0 290.9 L1230.0 273.6 L1231.1 269.6 L1232.1 258.7 L1233.2 276.8 L1234.3 283.1 L1235.3 302.3 L1236.4 290.4 L1237.5 290.7 L1238.5 276.0 L1239.6 271.1 L1240.0 272.3 L1241.0 284.6 L1242.0 293.5 L1243.1 293.0 L1244.1 281.8 L1245.2 283.7 L1246.2 274.8 L1247.5 294.7 L1248.7 304.7 L1249.7 299.1 L1250.7 285.7 L1251.7 284.8 L1252.7 267.9 L1253.7 263.6 L1255.0 270.6 L1256.2 282.6 L1257.5 289.8 L1258.5 283.1 L1259.5 268.5 L1260.4 264.8 L1261.6 270.6 L1262.7 286.4 L1263.8 290.5 L1264.9 304.7 L1265.9 288.3 L1266.9 285.4 L1267.9 267.9 L1268.9 262.0 L1269.9 247.4 L1270.9 258.9 L1271.9 267.3 L1273.0 266.4 L1274.1 258.5 L1275.2 264.9 L1276.3 256.2 L1277.4 257.4 L1278.4 259.4 L1279.4 273.6 L1280.4 273.1 L1281.4 288.6 L1282.4 291.0 L1283.6 270.4 L1284.9 246.1 L1285.9 260.6 L1287.0 268.9 L1288.1 285.5 L1289.1 296.0 L1290.2 290.0 L1291.2 275.3 L1292.2 270.6 L1293.3 257.1 L1294.3 253.9 L1295.4 239.9 L1296.5 247.3 L1297.6 247.0 L1298.7 258.2 L1299.9 259.9 L1300.9 261.4 L1302.0 250.9 L1303.1 255.2 L1304.2 244.4 L1305.3 247.4 L1306.4 238.1 L1307.5 239.1 L1308.6 234.9 L1309.6 248.9 L1310.7 255.6 L1311.7 269.6 L1312.7 275.6 L1313.8 292.7 L1314.8 302.2 L1315.8 283.4 L1316.8 254.8 L1317.8 236.9 L1318.9 243.0 L1320.0 257.8 L1321.0 264.8 L1322.1 315.3 L1323.2 356.4 L1324.3 407.0 L1325.2 384.1 L1326.0 369.6 L1327.3 274.8 L1328.3 268.8 L1329.3 256.6 L1330.3 252.4 L1331.3 259.1 L1332.3 269.8 L1333.4 265.1 L1334.5 268.6 L1335.5 258.8 L1336.6 262.5 L1337.7 252.5 L1338.8 258.6 L1339.9 248.5 L1341.0 248.6 L1341.9 254.5 L1342.7 267.3 L1343.8 260.6 L1344.9 262.9 L1346.0 252.3 L1347.1 255.2 L1348.1 245.5 L1349.2 244.9 L1350.3 248.8 L1351.3 263.4 L1352.4 261.7 L1353.5 272.3 L1354.7 256.0 L1356.0 248.6 L1357.1 247.4 L1358.3 257.8 L1359.5 256.1 L1360.7 267.7 L1361.8 262.1 L1363.0 271.6 L1364.2 273.6 L1365.3 267.1 L1366.4 254.8 L1367.5 250.9 L1368.6 239.7 L1369.7 233.7 L1370.7 235.7 L1371.8 244.0 L1372.8 239.5 L1373.8 251.6 L1374.9 248.7 L1375.9 253.6 L1376.9 245.3 L1377.9 248.3 L1378.9 238.6 L1379.9 240.2 L1380.9 231.2 L1382.1 243.9 L1383.4 245.1 L1384.6 254.9 L1385.6 247.6 L1386.6 252.5 L1387.6 244.4 L1388.6 249.8 L1389.6 242.4 L1390.9 262.3 L1391.9 247.6 L1392.9 243.2 L1393.9 231.2 L1394.9 242.0 L1395.9 244.3 L1396.9 257.8 L1398.0 261.7 L1399.0 273.8 L1400.0 279.6 L1401.0 270.6 L1402.0 252.8 L1403.0 241.0 L1404.0 244.6 L1405.0 254.7 L1406.2 264.4 L1407.5 280.7 L1408.7 292.1 L1409.7 285.9 L1410.7 271.6 L1411.7 269.7 L1412.7 256.9 L1413.7 249.7 L1414.8 253.1 L1415.9 270.5 L1417.0 274.6 L1418.1 270.4 L1419.3 254.9 L1420.4 247.2 L1421.6 253.6 L1422.7 265.2 L1423.8 268.3 L1424.9 280.9 L1426.2 270.1 L1427.4 263.4 L1428.7 258.2 L1429.9 258.6 L1431.2 252.2 L1432.2 267.3 L1433.2 268.9 L1434.2 285.7 L1435.2 292.5 L1436.2 304.6 L1437.4 289.9 L1438.7 287.9 L1439.9 274.6 L1440.9 274.9 L1442.0 266.2 L1443.0 265.3 L1444.1 256.8 L1445.1 259.7 L1446.1 253.4 L1447.4 258.5 L1448.6 256.2 L1449.9 264.7 L1450.9 263.6 L1451.9 273.9 L1452.9 270.8 L1453.9 279.1 L1454.9 277.1 L1456.1 266.3 L1457.4 248.6 L1458.6 241.0 L1459.6 241.9 L1460.6 250.8 L1461.6 249.0 L1462.6 260.6 L1463.6 259.7 L1464.6 266.7 L1465.6 268.1 L1466.6 277.7 L1467.6 277.7 L1468.6 284.6 L1469.8 267.0 L1471.1 253.8 L1472.3 236.0 L1473.3 241.4 L1474.3 242.7 L1475.3 251.0 L1476.3 250.7 L1477.3 257.2 L1478.3 251.5 L1479.4 256.0 L1480.4 249.2 L1481.5 252.2 L1482.5 246.5 L1483.5 247.2 L1484.8 249.9 L1486.0 254.7 L1487.1 248.7 L1488.1 247.9 L1489.2 238.9 L1490.2 242.1 L1491.2 233.2 L1492.3 231.0 L1493.3 245.6 L1494.3 265.9 L1495.4 256.5 L1496.5 258.1 L1497.7 247.7 L1498.8 250.1 L1500.0 239.8 L1501.1 242.5 L1502.2 233.5 L1503.2 246.3 L1504.2 250.9 L1505.2 267.9 L1506.2 269.5 L1507.2 284.6 L1508.5 268.1 L1509.7 260.7 L1511.0 242.2 L1512.0 247.7 L1513.1 242.0 L1514.1 249.8 L1515.1 246.5 L1516.2 251.7 L1517.2 252.2 L1518.2 245.2 L1519.2 234.0 L1520.2 230.7 L1521.2 216.3 L1522.2 209.8 L1523.2 231.8 L1524.2 257.2 L1525.2 237.1 L1526.2 224.1 L1527.2 201.1 L1528.2 239.8 L1529.2 269.7 L1530.3 229.9 L1531.5 180.7 L1532.7 139.5 L1533.9 200.7 L1535.2 265.9 L1536.3 259.2 L1537.5 259.6 L1538.7 250.6 L1539.8 250.4 L1541.0 241.0 L1542.1 238.5 L1543.1 237.9 L1544.1 251.8 L1545.1 248.0 L1546.1 257.4 L1547.1 259.7 L1548.4 259.1 L1549.6 246.6 L1550.9 243.5 L1551.9 245.3 L1552.9 252.9 L1553.9 253.7 L1554.9 263.3 L1555.9 264.7 L1556.9 263.9 L1557.9 255.4 L1559.0 256.5 L1560.0 248.7 L1561.1 248.0 L1562.1 242.2 L1563.1 248.1 L1564.1 248.6 L1565.1 256.9 L1566.1 259.1 L1567.1 264.7" fill="none" stroke="#1f77b4" stroke-width="1.3" stroke-linejoin="round"/><line x1="907.5" y1="137.5" x2="912.5" y2="137.5" stroke="#000" stroke-width="1"/><line x1="907.5" y1="178.5" x2="912.5" y2="178.5" stroke="#000" stroke-width="1"/><line x1="907.5" y1="218.5" x2="912.5" y2="218.5" stroke="#000" stroke-width="1"/><line x1="907.5" y1="258.5" x2="912.5" y2="258.5" stroke="#000" stroke-width="1"/><line x1="907.5" y1="298.5" x2="912.5" y2="298.5" stroke="#000" stroke-width="1"/><line x1="907.5" y1="338.5" x2="912.5" y2="338.5" stroke="#000" stroke-width="1"/><line x1="907.5" y1="379.5" x2="912.5" y2="379.5" stroke="#000" stroke-width="1"/><line x1="907.5" y1="419.5" x2="912.5" y2="419.5" stroke="#000" stroke-width="1"/><line x1="927.5" y1="433.5" x2="927.5" y2="438.5" stroke="#000" stroke-width="1"/><line x1="1013.5" y1="433.5" x2="1013.5" y2="438.5" stroke="#000" stroke-width="1"/><line x1="1099.5" y1="433.5" x2="1099.5" y2="438.5" stroke="#000" stroke-width="1"/><line x1="1186.5" y1="433.5" x2="1186.5" y2="438.5" stroke="#000" stroke-width="1"/><line x1="1271.5" y1="433.5" x2="1271.5" y2="438.5" stroke="#000" stroke-width="1"/><line x1="1358.5" y1="433.5" x2="1358.5" y2="438.5" stroke="#000" stroke-width="1"/><line x1="1444.5" y1="433.5" x2="1444.5" y2="438.5" stroke="#000" stroke-width="1"/><line x1="1530.5" y1="433.5" x2="1530.5" y2="438.5" stroke="#000" stroke-width="1"/></svg>
<div class="t" style="left:801px;width:100.5px;text-align:right;top:129.5px;font-size:16px;line-height:18px;color:#000;transform:scaleX(1.11);transform-origin:100% 50%">2.4</div>
<div class="t" style="left:801px;width:100.5px;text-align:right;top:170.5px;font-size:16px;line-height:18px;color:#000;transform:scaleX(1.11);transform-origin:100% 50%">2.2</div>
<div class="t" style="left:801px;width:100.5px;text-align:right;top:210.5px;font-size:16px;line-height:18px;color:#000;transform:scaleX(1.11);transform-origin:100% 50%">2.0</div>
<div class="t" style="left:801px;width:100.5px;text-align:right;top:250.5px;font-size:16px;line-height:18px;color:#000;transform:scaleX(1.11);transform-origin:100% 50%">1.8</div>
<div class="t" style="left:801px;width:100.5px;text-align:right;top:290.5px;font-size:16px;line-height:18px;color:#000;transform:scaleX(1.11);transform-origin:100% 50%">1.6</div>
<div class="t" style="left:801px;width:100.5px;text-align:right;top:330.5px;font-size:16px;line-height:18px;color:#000;transform:scaleX(1.11);transform-origin:100% 50%">1.4</div>
<div class="t" style="left:801px;width:100.5px;text-align:right;top:371.5px;font-size:16px;line-height:18px;color:#000;transform:scaleX(1.11);transform-origin:100% 50%">1.2</div>
<div class="t" style="left:801px;width:100.5px;text-align:right;top:411.5px;font-size:16px;line-height:18px;color:#000;transform:scaleX(1.11);transform-origin:100% 50%">1.0</div>
<div class="t" style="left:887.5px;width:80px;text-align:center;top:441.2px;font-size:16px;line-height:18px;color:#000;transform:scaleX(1.11);transform-origin:50% 50%">4786</div>
<div class="t" style="left:973.5px;width:80px;text-align:center;top:441.2px;font-size:16px;line-height:18px;color:#000;transform:scaleX(1.11);transform-origin:50% 50%">5012</div>
<div class="t" style="left:1059.5px;width:80px;text-align:center;top:441.2px;font-size:16px;line-height:18px;color:#000;transform:scaleX(1.11);transform-origin:50% 50%">5248</div>
<div class="t" style="left:1146.5px;width:80px;text-align:center;top:441.2px;font-size:16px;line-height:18px;color:#000;transform:scaleX(1.11);transform-origin:50% 50%">5495</div>
<div class="t" style="left:1231.5px;width:80px;text-align:center;top:441.2px;font-size:16px;line-height:18px;color:#000;transform:scaleX(1.11);transform-origin:50% 50%">5754</div>
<div class="t" style="left:1318.5px;width:80px;text-align:center;top:441.2px;font-size:16px;line-height:18px;color:#000;transform:scaleX(1.11);transform-origin:50% 50%">6026</div>
<div class="t" style="left:1404.5px;width:80px;text-align:center;top:441.2px;font-size:16px;line-height:18px;color:#000;transform:scaleX(1.11);transform-origin:50% 50%">6310</div>
<div class="t" style="left:1490.5px;width:80px;text-align:center;top:441.2px;font-size:16px;line-height:18px;color:#000;transform:scaleX(1.11);transform-origin:50% 50%">6607</div>
<div class="t" style="left:911.5px;top:107px;font-size:16px;line-height:18px;color:#000;transform:scaleX(1.17);transform-origin:0 50%">1e&minus;16</div>
<div class="t" style="left:1140px;width:200px;text-align:center;top:465px;font-size:16px;line-height:18px;color:#000;transform:scaleX(1.14);transform-origin:50% 50%">Wavelength [&Aring;]</div>
<div class="t" style="left:832.5px;top:273px;width:60px;height:18px;text-align:center;font-size:16px;line-height:18px;color:#000;transform:rotate(-90deg) scaleX(1.08)">Flux</div>
<div class="t" style="left:918.1px;top:173.0px;width:74.79999999999998px;height:16px;text-align:center;font-size:14.6px;line-height:16px;color:#8b0000;transform:rotate(-90deg)">H&beta; (4861 &Aring;)</div>
<div class="t" style="left:963.5px;top:181.6px;width:92.0px;height:16px;text-align:center;font-size:14.6px;line-height:16px;color:#8b0000;transform:rotate(-90deg)">[O III] (5007 &Aring;)</div>
<div class="t" style="left:1479.0px;top:173.0px;width:74.79999999999998px;height:16px;text-align:center;font-size:14.6px;line-height:16px;color:#8b0000;transform:rotate(-90deg)">H&alpha; (6563 &Aring;)</div>
<div class="t" style="left:1266px;width:300px;text-align:right;top:413.5px;font-size:15px;line-height:18px;color:#000;transform:scaleX(1.11);transform-origin:100% 50%">Estimated z reset</div>
</body></html>
